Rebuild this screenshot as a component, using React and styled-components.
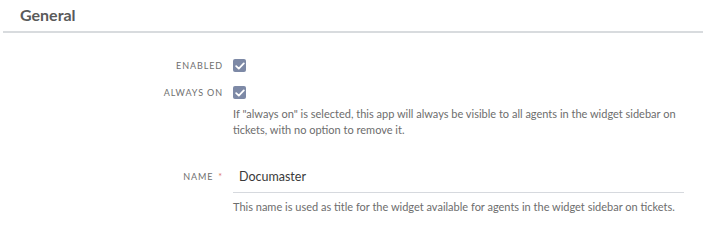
import React from "react";
import styled, { createGlobalStyle } from "styled-components";

const Global = createGlobalStyle`
  html, body { margin: 0; padding: 0; background: #fff; }
  body { font-family: Lato, "Open Sans", sans-serif; }
`;

const Page = styled.div`
  width: 707px;
  height: 246px;
  padding: 0 4px 0 3px;
  box-sizing: border-box;
`;

const Header = styled.div`
  height: 31px;
  border-bottom: 2px solid #d8dbde;
  box-sizing: content-box;
  display: flex;
  align-items: center;
  padding-left: 17px;
`;

const Title = styled.h2`
  margin: -1px 0 0;
  font-size: 16px;
  font-weight: 700;
  color: #5a5a5a;
  line-height: 1;
`;

const Form = styled.div`
  display: grid;
  grid-template-columns: 221px 1fr;
  column-gap: 9px;
  padding-top: 26px;
`;

const Label = styled.div`
  text-align: right;
  font-size: 9px;
  letter-spacing: 0.9px;
  padding-right: 1px;
  text-transform: uppercase;
  color: #6f6f6f;
  height: ${(p) => p.h || 13}px;
  line-height: ${(p) => p.h || 13}px;
  margin-top: ${(p) => p.mt || 0}px;
`;

const Star = styled.span`
  color: #e07a6a;
  margin-left: 5px;
`;

const Field = styled.div`
  margin-top: ${(p) => p.mt || 0}px;
  padding-right: 19px;
`;

const Check = styled.span`
  width: 13px;
  height: 13px;
  border-radius: 2px;
  background: #7d89a6;
  display: flex;
  align-items: center;
  justify-content: center;
`;

const Help = styled.p`
  margin: ${(p) => p.mt || 0}px 0 0;
  font-size: 11px;
  line-height: 16px;
  color: #6d6d6d;
`;

const Input = styled.div`
  border-bottom: 1px solid #d6d9de;
  height: 30px;
  line-height: 30px;
  padding-left: 6px;
  font-size: 12.5px;
  color: #3a3a3a;
`;

const Tick = () => (
  <svg width="10" height="8" viewBox="0 0 10 8">
    <path d="M1.2 4.2 L3.8 6.6 L8.8 1.4" fill="none" stroke="#fff" strokeWidth="1.8" strokeLinecap="round" strokeLinejoin="round" />
  </svg>
);

export default function App() {
  return (
    <>
      <Global />
      <Page>
        <Header>
          <Title>General</Title>
        </Header>
        <Form>
          <Label>Enabled</Label>
          <Field>
            <Check><Tick /></Check>
          </Field>
          <Label mt={14}>Always on</Label>
          <Field mt={14}>
            <Check><Tick /></Check>
            <Help mt={7}>
              If "always on" is selected, this app will always be visible to all agents in the widget sidebar on tickets, with no option to remove it.
            </Help>
          </Field>
          <Label mt={24} h={30}>Name<Star>*</Star></Label>
          <Field mt={24}>
            <Input>Documaster</Input>
            <Help mt={6}>This name is used as title for the widget available for agents in the widget sidebar on tickets.</Help>
          </Field>
        </Form>
      </Page>
    </>
  );
}
